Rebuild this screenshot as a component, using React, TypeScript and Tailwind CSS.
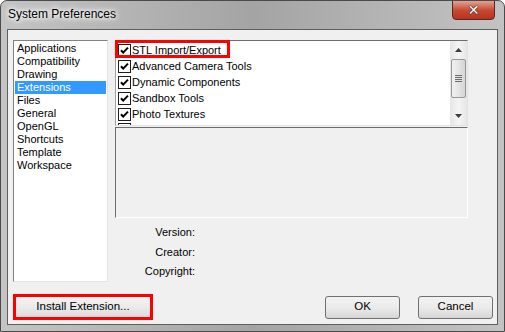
import React from "react";

const font = { fontFamily: '"Liberation Sans", Arial, sans-serif' };

function Check() {
  return (
    <svg width="13" height="13" viewBox="0 0 13 13" className="shrink-0">
      <rect x="0.5" y="0.5" width="12" height="12" fill="#fff" stroke="#1c1c1c" />
      <path d="M3 6.2 L5.2 8.6 L10 3.6" fill="none" stroke="#000" strokeWidth="2" />
    </svg>
  );
}

const leftItems = [
  "Applications",
  "Compatibility",
  "Drawing",
  "Extensions",
  "Files",
  "General",
  "OpenGL",
  "Shortcuts",
  "Template",
  "Workspace",
];

const extItems = [
  "STL Import/Export",
  "Advanced Camera Tools",
  "Dynamic Components",
  "Sandbox Tools",
  "Photo Textures",
];

function WinButton({ children, className = "" }: { children: React.ReactNode; className?: string }) {
  return (
    <div
      className={
        "h-[23px] flex items-center justify-center rounded-[3px] border border-[#707070] bg-gradient-to-b from-[#f2f2f2] via-[#ebebeb] to-[#d6d6d6] text-[11.5px] text-black " +
        className
      }
    >
      {children}
    </div>
  );
}

export default function App() {
  return (
    <div
      className="w-[505px] h-[332px] relative overflow-hidden rounded-t-[7px] border border-[#4a4a4a] bg-gradient-to-r from-[#c4c4c4] via-[#a4a4a4] to-[#c3c3c3] flex flex-col"
      style={font}
    >
      {/* title bar */}
      <div className="h-[28px] flex items-start pl-[7px] pt-[6px] shrink-0">
        <span
          className="text-[12px] text-black leading-[15px]"
          style={{ textShadow: "0 0 8px #fff, 0 0 6px #fff, 0 0 4px #fff" }}
        >
          System Preferences
        </span>
      </div>
      {/* close button */}
      <div className="absolute top-[-1px] right-[9px] w-[43px] h-[20px] rounded-b-[4px] border border-[#5a2a22] bg-gradient-to-b from-[#e0a295] via-[#c74a33] to-[#b8321c] flex items-center justify-center">
        <span
          className="text-white font-bold text-[14px] leading-none"
          style={{ fontFamily: '"DejaVu Sans", sans-serif', textShadow: "0 0 1px #222, 0 0 1px #222, 0 0 1px #222" }}
        >
          ✕
        </span>
      </div>

      {/* client area */}
      <div className="mx-[6px] mb-[6px] flex-1 border border-[#5e5e5e] bg-[#f0f0f0] flex flex-col pl-[5px] pr-[3px] pt-[10px] pb-[4px]">
        <div className="flex gap-[7px]">
          {/* left list */}
          <div className="w-[95px] h-[242px] bg-white border border-t-[#828282] border-l-[#828282] border-r-[#e3e3e3] border-b-[#e3e3e3] pt-[1px] pl-[1px]">
            {leftItems.map((it) => (
              <div
                key={it}
                className={
                  "h-[13px] leading-[13px] text-[11px] pl-[2px] mr-[1px] " +
                  (it === "Extensions" ? "bg-[#3399ff] text-white" : "text-black")
                }
              >
                {it}
              </div>
            ))}
          </div>

          {/* right column */}
          <div className="w-[353px] flex flex-col">
            <div className="relative h-[86px] bg-white border border-t-[#6d6d6d] border-l-[#a0a0a0] border-r-[#e3e3e3] border-b-[#e3e3e3] flex">
              <div className="flex-1 overflow-hidden pt-[1px] pl-[2px]">
                {extItems.map((it) => (
                  <div key={it} className="h-[16px] flex items-center gap-[1px] text-[11px] text-black">
                    <Check />
                    <span className="leading-[16px]">{it}</span>
                  </div>
                ))}
                <div className="h-[16px] pt-[1px] flex">
                  <Check />
                </div>
              </div>
              {/* scrollbar */}
              <div className="w-[17px] h-full bg-gradient-to-r from-[#e6e6e6] via-[#f4f4f4] to-[#e6e6e6] flex flex-col items-center">
                <div className="h-[18px] w-full flex items-center justify-center">
                  <svg width="7" height="4" viewBox="0 0 7 4">
                    <path d="M3.5 0 L7 4 L0 4 Z" fill="#3c3c3c" />
                  </svg>
                </div>
                <div className="w-[15px] h-[39px] rounded-[2px] border border-[#979797] bg-gradient-to-r from-[#f0f0f0] via-[#e4e4e4] to-[#d4d4d4] flex flex-col items-center justify-center gap-[1px]">
                  <div className="w-[7px] h-[1px] bg-[#6a6a6a]" />
                  <div className="w-[7px] h-[1px] bg-[#6a6a6a]" />
                  <div className="w-[7px] h-[1px] bg-[#6a6a6a]" />
                  <div className="w-[7px] h-[1px] bg-[#6a6a6a]" />
                </div>
                <div className="flex-1" />
                <div className="h-[18px] w-full flex items-center justify-center">
                  <svg width="7" height="4" viewBox="0 0 7 4">
                    <path d="M0 0 L7 0 L3.5 4 Z" fill="#3c3c3c" />
                  </svg>
                </div>
              </div>
              {/* red highlight */}
              <div className="absolute left-[-1px] top-[-1px] w-[115px] h-[18px] border-[3px] border-[#ff0000]" />
            </div>

            <div className="mt-[1px] h-[91px] border border-t-[#6d6d6d] border-l-[#6d6d6d] border-r-[#ffffff] border-b-[#ffffff] bg-[#f0f0f0]" />

            <div className="w-[80px] mt-[8px] flex flex-col items-end text-[11px] text-black">
              <div className="h-[19.5px] leading-[12px]">Version:</div>
              <div className="h-[19.5px] leading-[12px]">Creator:</div>
              <div className="h-[19.5px] leading-[12px]">Copyright:</div>
            </div>
          </div>
        </div>

        <div className="flex-1" />

        {/* buttons */}
        <div className="flex items-center">
          <div className="w-[140px] h-[26px] border-[3px] border-[#ff0000] flex">
            <div className="flex-1 flex items-center justify-center bg-gradient-to-b from-[#f2f2f2] via-[#ebebeb] to-[#dcdcdc] text-[11.5px] text-black">
              Install Extension...
            </div>
          </div>
          <div className="flex-1" />
          <WinButton className="w-[75px]">OK</WinButton>
          <WinButton className="w-[75px] ml-[18px] mr-[1px]">Cancel</WinButton>
        </div>
      </div>
    </div>
  );
}
